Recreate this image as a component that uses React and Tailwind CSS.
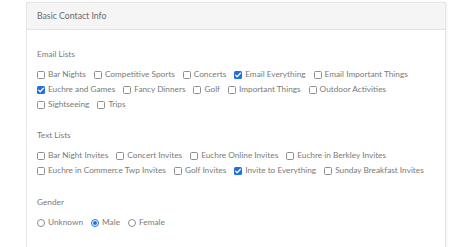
import React from "react";

const emailLists = [
  ["Bar Nights", false],
  ["Competitive Sports", false],
  ["Concerts", false],
  ["Email Everything", true],
  ["Email Important Things", false],
  ["Euchre and Games", true],
  ["Fancy Dinners", false],
  ["Golf", false],
  ["Important Things", false],
  ["Outdoor Activities", false],
  ["Sightseeing", false],
  ["Trips", false],
];

const textLists = [
  ["Bar Night Invites", false],
  ["Concert Invites", false],
  ["Euchre Online Invites", false],
  ["Euchre in Berkley Invites", false],
  ["Euchre in Commerce Twp Invites", false],
  ["Golf Invites", false],
  ["Invite to Everything", true],
  ["Sunday Breakfast Invites", false],
];

const genders = [
  ["Unknown", false],
  ["Male", true],
  ["Female", false],
];

function Check({ label, checked }) {
  return (
    <label className="flex items-center h-[15px]">
      {checked ? (
        <span className="w-[8px] h-[8px] rounded-[1.5px] bg-[#1f6fe5] flex items-center justify-center mr-[3px] shrink-0">
          <svg width="8" height="8" viewBox="0 0 8 8">
            <path d="M1.6 4.1 L3.2 5.7 L6.4 2.2" fill="none" stroke="white" strokeWidth="1.3" strokeLinecap="round" strokeLinejoin="round" />
          </svg>
        </span>
      ) : (
        <span className="w-[8px] h-[8px] rounded-[1.5px] border border-[#8f8f8f] bg-white mr-[3px] shrink-0" />
      )}
      <span>{label}</span>
    </label>
  );
}

function Radio({ label, checked }) {
  return (
    <label className="flex items-center h-[15px]">
      {checked ? (
        <span className="w-[8px] h-[8px] rounded-full border border-[#1f6fe5] bg-white flex items-center justify-center mr-[3px] shrink-0">
          <span className="w-[4px] h-[4px] rounded-full bg-[#1f6fe5]" />
        </span>
      ) : (
        <span className="w-[8px] h-[8px] rounded-full border border-[#8f8f8f] bg-white mr-[3px] shrink-0" />
      )}
      <span>{label}</span>
    </label>
  );
}

function Section({ title, children, className }) {
  return (
    <div className={className}>
      <div className="h-[15px] leading-[15px] mb-[5px]">{title}</div>
      <div className="flex flex-wrap gap-x-[8px]">{children}</div>
    </div>
  );
}

export default function App() {
  return (
    <div className="w-[474px] h-[247px] bg-white overflow-hidden" style={{ fontFamily: "Lato, 'Open Sans', sans-serif" }}>
      <div className="ml-[26px] w-[420px] mt-[2px] border border-[#e6e6e6] shadow-[1px_0_2px_rgba(0,0,0,0.06)] text-[8.25px] text-[#7a7a7a]">
        <div className="h-[27px] bg-[#f5f5f5] border-b border-[#e3e3e3] px-[10px] flex items-center text-[#6a6a6a] text-[8.7px]">
          Basic Contact Info
        </div>
        <div className="px-[10px] pt-[17px] pb-[20px]">
          <Section title="Email Lists">
            {emailLists.map(([l, c]) => (
              <Check key={l} label={l} checked={c} />
            ))}
          </Section>
          <Section title="Text Lists" className="mt-[16px]">
            {textLists.map(([l, c]) => (
              <Check key={l} label={l} checked={c} />
            ))}
          </Section>
          <Section title="Gender" className="mt-[17px]">
            {genders.map(([l, c]) => (
              <Radio key={l} label={l} checked={c} />
            ))}
          </Section>
        </div>
      </div>
    </div>
  );
}
